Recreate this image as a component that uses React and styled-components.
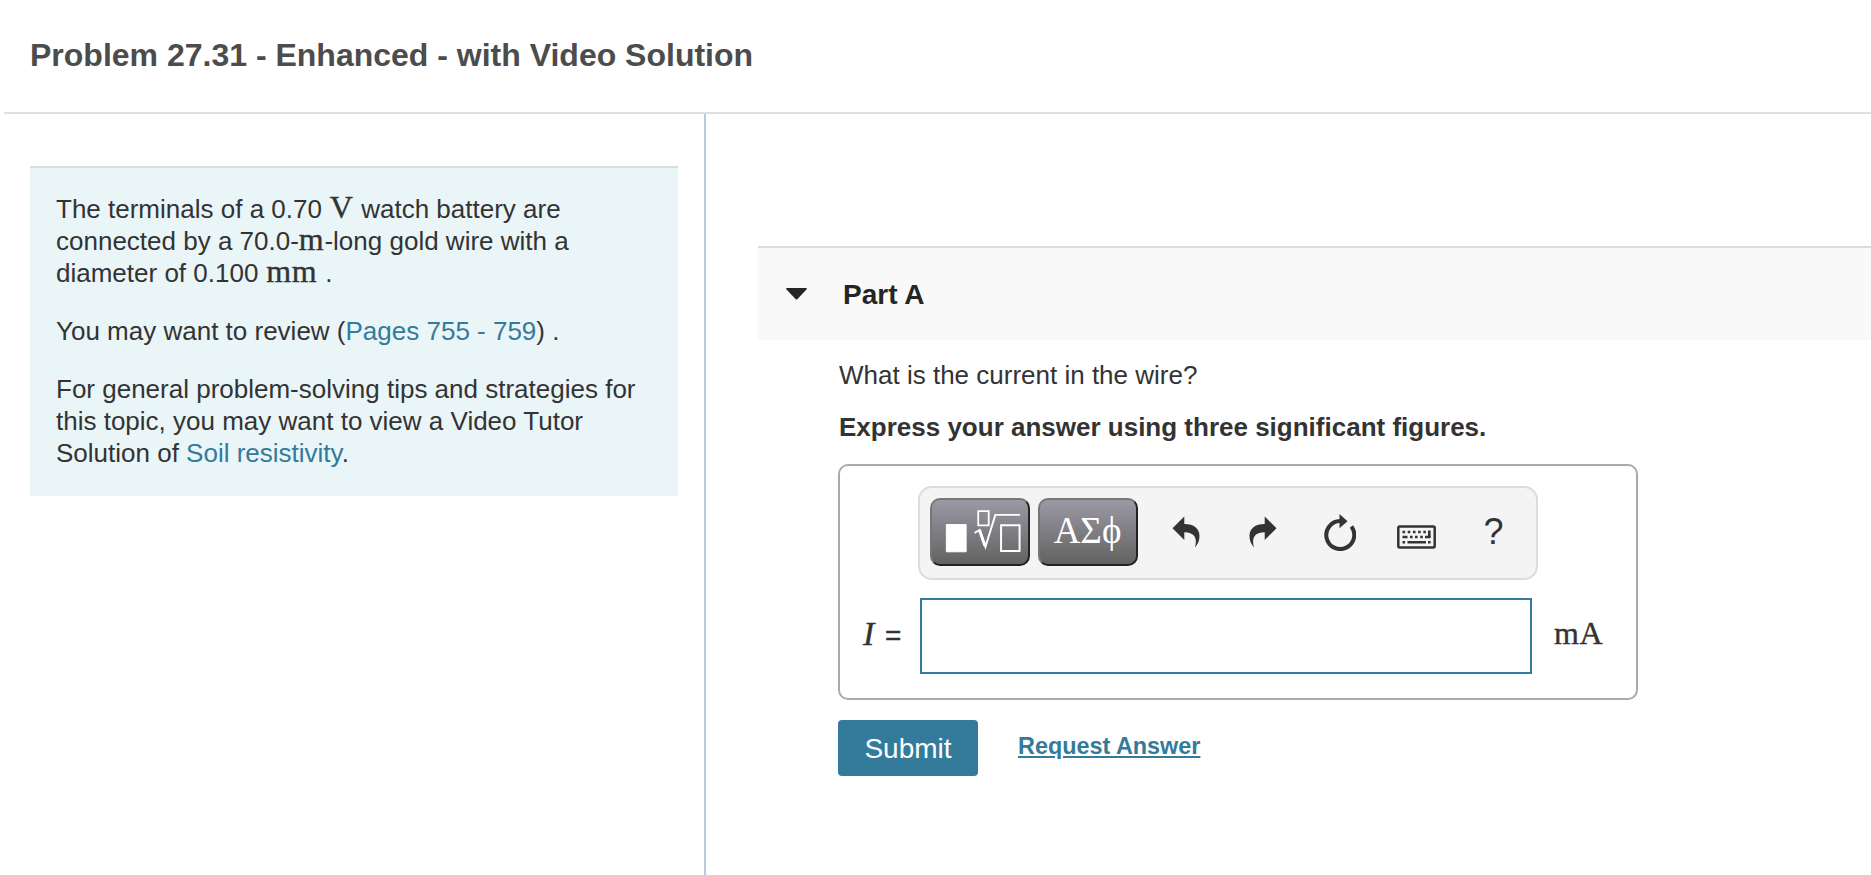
import React from 'react';
import styled, { createGlobalStyle } from 'styled-components';

const GlobalStyle = createGlobalStyle`
  * {
    box-sizing: border-box;
  }

  body {
    margin: 0;
    background: #fff;
    color: #333;
    font-family: 'Liberation Sans', Arial, sans-serif;
    font-size: 26px;
    line-height: 32px;
    overflow: hidden;
  }
`;

const Page = styled.div`
  display: flex;
  flex-direction: column;
  height: 100vh;
`;

const Header = styled.header`
  height: 114px;
  margin-left: 4px;
  padding: 36px 0 0 26px;
  border-bottom: 2px solid #dfdfdf;
`;

const Title = styled.h1`
  margin: 0;
  color: #4c4c4c;
  font-size: 32px;
  line-height: 38px;
  font-weight: 700;
  white-space: nowrap;
`;

const Columns = styled.main`
  display: flex;
  flex: 1;
  min-height: 0;
`;

const Sidebar = styled.aside`
  width: 706px;
  flex-shrink: 0;
  padding: 52px 26px 0 30px;
  border-right: 2px solid #bacbdd;
`;

const Introduction = styled.section`
  height: 330px;
  padding: 25px 26px 0;
  border-top: 2px solid #dcdddf;
  background: #eaf5f8;
`;

const Paragraph = styled.p`
  margin: 0 0 26px;
  white-space: nowrap;
`;

const Unit = styled.span`
  margin: 0 ${({ $gap }) => $gap || 0}px;
  font-family: 'Liberation Serif', 'Times New Roman', serif;
  font-size: ${({ $size }) => $size || 32}px;
  font-style: ${({ $italic }) => ($italic ? 'italic' : 'normal')};
  line-height: 1px;
  letter-spacing: 0.7px;
  -webkit-text-stroke: 0.4px currentColor;
`;

const Link = styled.a`
  color: #337a9b;
  text-decoration: none;
`;

const Content = styled.section`
  flex: 1;
  min-width: 0;
  padding: 132px 0 0 52px;
`;

const PartHeader = styled.div`
  display: flex;
  align-items: center;
  gap: 36px;
  height: 94px;
  padding: 0 0 0 28px;
  border-top: 2px solid #dcdcdc;
  background: #f9f9f9;
`;

const PartTitle = styled.h2`
  margin: 2px 0 0;
  color: #252525;
  font-size: 28px;
  line-height: 34px;
`;

const Question = styled.div`
  padding: 19px 0 0 80px;
`;

const Prompt = styled.p`
  margin: 0 0 ${({ $strong }) => ($strong ? 21 : 20)}px;
  padding-left: 1px;
  font-weight: ${({ $strong }) => ($strong ? 700 : 400)};
`;

const AnswerBox = styled.div`
  width: 800px;
  height: 236px;
  padding: 20px 0 0 20px;
  border: 2px solid #aaa;
  border-radius: 10px;
`;

const Toolbar = styled.div`
  display: flex;
  align-items: center;
  width: 620px;
  height: 94px;
  margin-left: 58px;
  padding: 0 10px 2px;
  border: 2px solid #dcdcdc;
  border-radius: 14px;
  background: #f4f4f4;
`;

const PaletteButton = styled.button`
  display: flex;
  align-items: center;
  justify-content: center;
  flex-shrink: 0;
  width: 100px;
  height: 68px;
  margin-right: 8px;
  padding: 0 1px 2px 0;
  border: 2px solid;
  border-color: #777 #222 #222 #777;
  border-radius: 10px;
  background: linear-gradient(#9b99a4, #626262);
  color: #fff;
  font-family: 'Liberation Serif', serif;
  font-size: 37px;
  line-height: 40px;
`;

const IconButton = styled.button`
  display: flex;
  align-items: center;
  justify-content: center;
  width: 76.8px;
  height: 68px;
  padding: ${({ $drop }) => $drop || 0}px 0 0;
  border: 0;
  background: none;
  color: #333;
  font-family: inherit;
  font-size: 36px;
`;

const Tools = styled.div`
  display: flex;
  flex-shrink: 0;
  margin-left: 2px;
`;

const AnswerRow = styled.div`
  display: flex;
  align-items: center;
  height: 76px;
  margin-top: 18px;
`;

const Variable = styled.label`
  display: flex;
  align-items: baseline;
  gap: 10px;
  width: 60px;
  padding-left: 3px;
`;

const Equals = styled.span`
  font-size: 28px;
  line-height: 30px;
  -webkit-text-stroke: 0.4px currentColor;
`;

const Input = styled.input`
  width: 612px;
  height: 76px;
  margin-right: 22px;
  border: 2px solid #337a9b;
  border-radius: 0;
  background: #fff;
  outline: none;
`;

const Suffix = styled.div`
  padding-bottom: 2px;
`;

const Actions = styled.div`
  display: flex;
  align-items: center;
  gap: 40px;
  margin-top: 20px;
`;

const SubmitButton = styled.button`
  width: 140px;
  height: 56px;
  padding: 2px 0 0;
  border: 0;
  border-radius: 4px;
  background: #337a9b;
  color: #fff;
  font-family: inherit;
  font-size: 28px;
`;

const RequestLink = styled.a`
  margin-top: -4px;
  color: #337a9b;
  font-size: 23.4px;
  font-weight: 700;
  text-decoration: underline;
  text-decoration-thickness: 2px;
  text-underline-offset: 2px;
`;

function RootIcon() {
  return (
    <svg width="96" height="64" viewBox="931 499 96 64" fill="none" stroke="#fff">
      <path d="M945.5 524.5h20v27.5h-20z" fill="#fff" />
      <path d="M977.7 511h10.6v14.3h-10.6z" strokeWidth="1.8" />
      <path d="M1000.8 525.3h18.7v26h-18.7z" strokeWidth="2" />
      <path d="M974 533l5-3 6 17 10-32.3h25" strokeWidth="2" />
      <path d="M979 530l5.5 16" strokeWidth="3" />
    </svg>
  );
}

function UndoIcon({ flipped }) {
  return (
    <svg width="28" height="32" viewBox="0 0 28 32" fill="currentColor">
      <path
        transform={flipped ? 'matrix(-1 0 0 1 28 0)' : undefined}
        d="M0.5 12.3L12.3 0.5V8C22 8 27.5 12.5 27.5 20c0 4.5-1.5 8-4.500 11.500C25.500 22.500 23 16.200 12.300 16.200V24z"
      />
    </svg>
  );
}

function ResetIcon() {
  return (
    <svg width="32" height="37" viewBox="0 0 32 37" fill="none" stroke="currentColor">
      <path d="M27.4 12.5A14 14 0 1 1 16 7" strokeWidth="4" />
      <path d="M15.5 0l8 7.3-8 7z" fill="currentColor" stroke="none" />
    </svg>
  );
}

function KeyboardIcon() {
  return (
    <svg width="39" height="24" viewBox="0 0 39 24" fill="none" stroke="currentColor">
      <rect x="1.3" y="1.5" width="36.4" height="21" rx="1.5" strokeWidth="2.5" />
      <path d="M5.5 7h23.5" strokeWidth="2.6" strokeDasharray="2.6 2.6" />
      <path d="M5.5 12h5M13 12h2.6M18 12h2.6M23.2 12h2.6M28 12h5.5" strokeWidth="2.6" />
      <path d="M32.3 5.5v7" strokeWidth="2.7" />
      <path d="M5.5 17.2h2.6M10.5 17.2h18.5M31 17.2h2.6" strokeWidth="2.4" />
    </svg>
  );
}

export default function App() {
  return (
    <Page>
      <GlobalStyle />
      <Header>
        <Title>Problem 27.31 - Enhanced - with Video Solution</Title>
      </Header>
      <Columns>
        <Sidebar>
          <Introduction>
            <Paragraph>
              The terminals of a 0.70 <Unit $gap={0.5}>V</Unit> watch battery are
              <br />
              connected by a 70.0-<Unit>m</Unit>-long gold wire with a
              <br />
              diameter of 0.100 <Unit $gap={0.7}>mm</Unit> .
            </Paragraph>
            <Paragraph>
              You may want to review (<Link>Pages 755 - 759</Link>) .
            </Paragraph>
            <Paragraph>
              For general problem-solving tips and strategies for
              <br />
              this topic, you may want to view a Video Tutor
              <br />
              Solution of <Link>Soil resistivity</Link>.
            </Paragraph>
          </Introduction>
        </Sidebar>
        <Content>
          <PartHeader>
            <svg width="21" height="12" viewBox="0 0 21 12" fill="#252525">
              <path d="M1 0h19q1.5 0 .5 1.5L11.5 11q-1 1-2 0L.5 1.5Q-.5 0 1 0z" />
            </svg>
            <PartTitle>Part A</PartTitle>
          </PartHeader>
          <Question>
            <Prompt>What is the current in the wire?</Prompt>
            <Prompt $strong>Express your answer using three significant figures.</Prompt>
            <AnswerBox>
              <Toolbar>
                <PaletteButton aria-label="Templates">
                  <RootIcon />
                </PaletteButton>
                <PaletteButton>ΑΣϕ</PaletteButton>
                <Tools>
                  <IconButton aria-label="Undo">
                    <UndoIcon />
                  </IconButton>
                  <IconButton aria-label="Redo">
                    <UndoIcon flipped />
                  </IconButton>
                  <IconButton aria-label="Reset">
                    <ResetIcon />
                  </IconButton>
                  <IconButton aria-label="Keyboard" $drop={10}>
                    <KeyboardIcon />
                  </IconButton>
                  <IconButton>?</IconButton>
                </Tools>
              </Toolbar>
              <AnswerRow>
                <Variable>
                  <Unit $italic $size={34}>
                    I
                  </Unit>
                  <Equals>=</Equals>
                </Variable>
                <Input />
                <Suffix>
                  <Unit>mA</Unit>
                </Suffix>
              </AnswerRow>
            </AnswerBox>
            <Actions>
              <SubmitButton>Submit</SubmitButton>
              <RequestLink>Request Answer</RequestLink>
            </Actions>
          </Question>
        </Content>
      </Columns>
    </Page>
  );
}
